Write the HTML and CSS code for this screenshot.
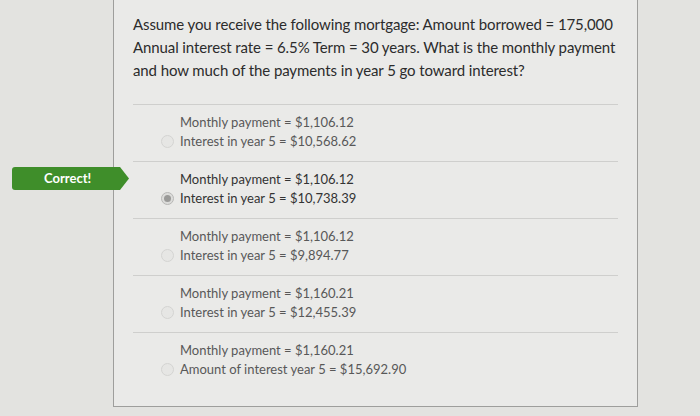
FILE: index.html
```html
<!DOCTYPE html>
<html>
<head>
<meta charset="utf-8">
<link rel="stylesheet" href="styles.css">
</head>
<body>
<div class="card">
  <div class="question">Assume you receive the following mortgage: Amount borrowed = 175,000<br>Annual interest rate = 6.5% Term = 30 years. What is the monthly payment<br>and how much of the payments in year 5 go toward interest?</div>
  <div class="options">
    <div class="option">
      <span class="radio"></span>
      <div class="text"><div>Monthly payment = $1,106.12</div><div>Interest in year 5 = $10,568.62</div></div>
    </div>
    <div class="option selected">
      <div class="badge">Correct!</div>
      <span class="radio"><span class="dot"></span></span>
      <div class="text"><div>Monthly payment = $1,106.12</div><div>Interest in year 5 = $10,738.39</div></div>
    </div>
    <div class="option">
      <span class="radio"></span>
      <div class="text"><div>Monthly payment = $1,106.12</div><div>Interest in year 5 = $9,894.77</div></div>
    </div>
    <div class="option">
      <span class="radio"></span>
      <div class="text"><div>Monthly payment = $1,160.21</div><div>Interest in year 5 = $12,455.39</div></div>
    </div>
    <div class="option last">
      <span class="radio"></span>
      <div class="text"><div>Monthly payment = $1,160.21</div><div>Amount of interest year 5 = $15,692.90</div></div>
    </div>
  </div>
</div>
</body>
</html>
```
FILE: styles.css
```css
html, body {
  margin: 0;
  padding: 0;
}
body {
  background: #e3e3e0;
  font-family: Lato, "Open Sans", sans-serif;
  width: 700px;
  height: 416px;
  overflow: hidden;
}
.card {
  margin-left: 113px;
  width: 525px;
  height: 407px;
  padding: 13px 19px 0 19px;
  box-sizing: border-box;
  background: #eaeae8;
  border-left: 1px solid #9e9e9c;
  border-right: 1px solid #9e9e9c;
  border-bottom: 1px solid #9e9e9c;
}
.question {
  font-size: 15px;
  letter-spacing: -0.1px;
  line-height: 23px;
  color: #2c2c2c;
  height: 91px;
  white-space: nowrap;
}
.option {
  position: relative;
  display: flex;
  align-items: flex-end;
  border-top: 1px solid #cfcfcd;
  padding: 8px 0 10px 28px;
  height: 38px;
}
.text {
  font-size: 13px;
  line-height: 19px;
  color: #585858;
  margin-left: 6px;
}
.selected .text {
  color: #333;
}
.radio {
  width: 11px;
  height: 11px;
  border-radius: 50%;
  border: 1px solid #d4d4d2;
  background: #e6e6e4;
  margin-bottom: 3px;
  display: flex;
  align-items: center;
  justify-content: center;
  box-sizing: content-box;
}
.selected .radio {
  border-color: #b8b8b6;
  background: #dcdcda;
}
.dot {
  width: 7px;
  height: 7px;
  border-radius: 50%;
  background: #9a9a98;
}
.badge {
  position: absolute;
  left: -121px;
  top: 5px;
  width: 117px;
  height: 23px;
  background: #3f8e2a;
  color: #fff;
  font-weight: bold;
  font-size: 13px;
  line-height: 23px;
  padding-left: 32px;
  box-sizing: border-box;
  border-radius: 3px 0 0 3px;
  clip-path: polygon(0 0, 108px 0, 117px 50%, 108px 100%, 0 100%);
}
```
